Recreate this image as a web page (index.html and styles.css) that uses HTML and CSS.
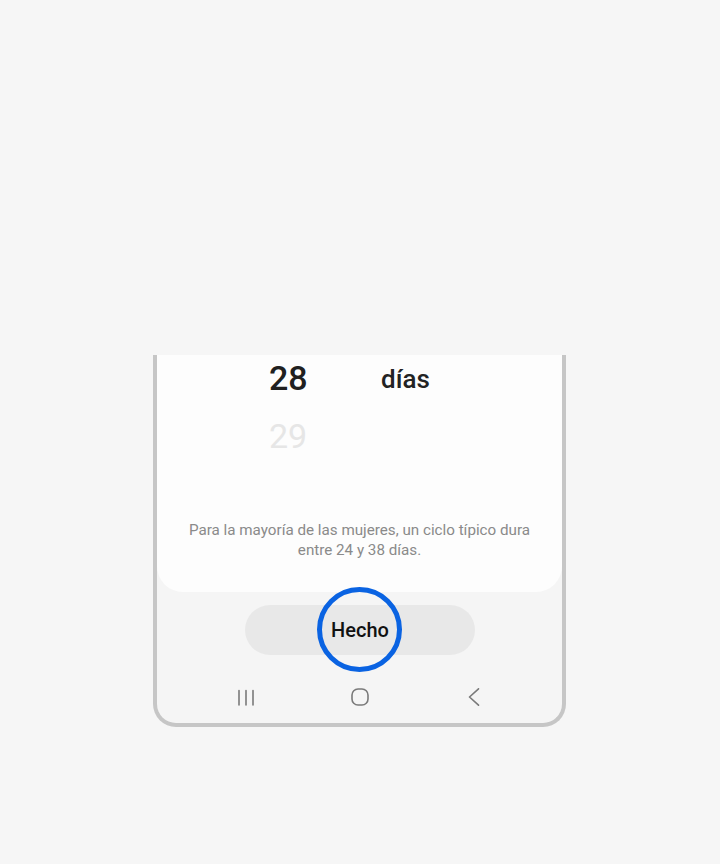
FILE: index.html
```html
<!DOCTYPE html>
<html lang="es">
<head>
<meta charset="utf-8">
<title>Ciclo</title>
<link rel="stylesheet" href="styles.css">
</head>
<body>
  <div class="phone">
    <div class="card">
      <div class="picker-row">
        <span class="num num-selected">28</span>
        <span class="unit">días</span>
      </div>
      <div class="picker-row picker-row-next">
        <span class="num num-faded">29</span>
      </div>
      <p class="hint">Para la mayoría de las mujeres, un ciclo típico dura<br>entre 24 y 38 días.</p>
    </div>
    <div class="actions">
      <button class="done-btn">Hecho<span class="ring"></span></button>
    </div>
    <nav class="navbar">
      <div class="nav-cell">
        <svg width="18" height="17" viewBox="0 0 18 17" class="nav-icon">
          <path d="M2 1.5V16M9 1.5V16M16 1.5V16" stroke="#7a7a7a" stroke-width="1.6" fill="none" stroke-linecap="round"/>
        </svg>
      </div>
      <div class="nav-cell">
        <svg width="18" height="18" viewBox="0 0 18 18" class="nav-icon">
          <rect x="1" y="1" width="16" height="16" rx="6" ry="6" stroke="#7a7a7a" stroke-width="1.6" fill="none"/>
        </svg>
      </div>
      <div class="nav-cell">
        <svg width="12" height="18" viewBox="0 0 12 18" class="nav-icon">
          <path d="M10.5 0.8L1.5 9L10.5 17.2" stroke="#7a7a7a" stroke-width="1.6" fill="none" stroke-linecap="round" stroke-linejoin="round"/>
        </svg>
      </div>
    </nav>
  </div>
</body>
</html>
```

FILE: styles.css
```css
html, body {
  margin: 0;
  padding: 0;
}

body {
  background: #f6f6f6;
  font-family: Roboto, "Noto Sans", "Liberation Sans", sans-serif;
  width: 720px;
  height: 864px;
  overflow: hidden;
}

.phone {
  box-sizing: border-box;
  width: 413px;
  height: 372px;
  margin: 355px 0 0 153px;
  border: 4px solid #c6c6c6;
  border-top: none;
  border-radius: 0 0 23px 23px;
  background: #f5f5f5;
  display: flex;
  flex-direction: column;
}

.card {
  height: 237px;
  background: #fdfdfd;
  border-radius: 0 0 26px 26px;
  padding-top: 3px;
  box-sizing: border-box;
  display: flex;
  flex-direction: column;
}

.picker-row {
  display: flex;
  align-items: baseline;
  height: 40px;
  padding-left: 112px;
}

.picker-row-next {
  margin-top: 18px;
}

.num {
  font-size: 34px;
  line-height: 40px;
  width: 40px;
  display: inline-block;
}

.num-selected {
  font-weight: 500;
  color: #202020;
}

.num-faded {
  font-weight: 400;
  color: #e6e6e6;
}

.unit {
  font-size: 26px;
  font-weight: 500;
  color: #232323;
  margin-left: 72px;
  position: relative;
  top: -2px;
}

.hint {
  margin: 64px 0 0 0;
  font-size: 15.2px;
  line-height: 20px;
  color: #8a8a8a;
  text-align: center;
}

.actions {
  display: flex;
  justify-content: center;
  padding-top: 13px;
}

.done-btn {
  position: relative;
  width: 230px;
  height: 50px;
  border: none;
  border-radius: 25px;
  background: #e8e8e8;
  font-family: Roboto, "Noto Sans", "Liberation Sans", sans-serif;
  font-size: 20px;
  font-weight: 500;
  color: #111111;
  padding: 0;
  margin-left: 1px;
}

.ring {
  position: absolute;
  box-sizing: border-box;
  width: 85px;
  height: 85px;
  left: calc(50% - 43px);
  top: calc(50% - 43px);
  border: 5px solid #0a63e2;
  border-radius: 50%;
}

.navbar {
  display: flex;
  justify-content: center;
  margin-top: 20px;
  height: 44px;
}

.nav-cell {
  width: 114px;
  display: flex;
  align-items: center;
  justify-content: center;
}

.nav-icon {
  display: block;
}
```
